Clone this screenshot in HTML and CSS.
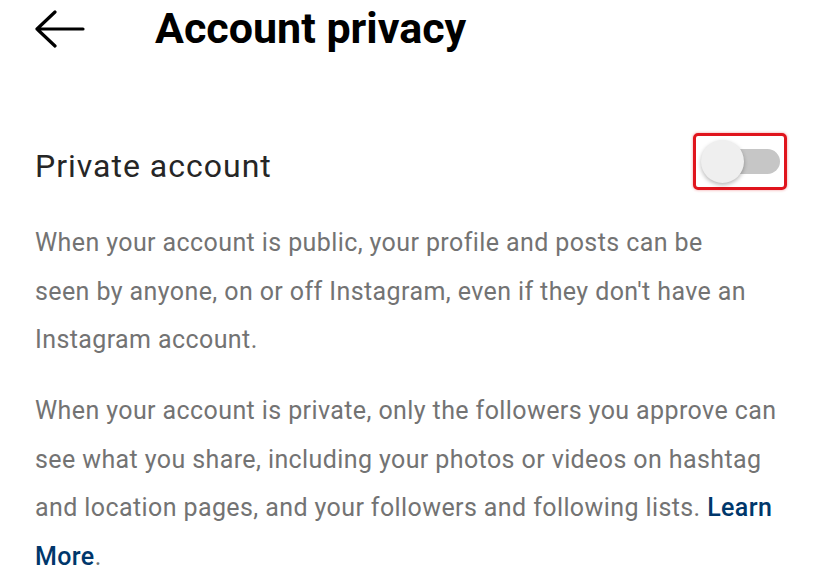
FILE: index.html
```html
<!DOCTYPE html>
<html lang="en">
<head>
<meta charset="utf-8">
<title>Account privacy</title>
<link rel="stylesheet" href="styles.css">
</head>
<body>
<header class="header">
  <svg class="back" width="50" height="40" viewBox="0 0 50 40" aria-hidden="true">
    <path d="M2 19 H48 M20 2 L2 19 L20 36" fill="none" stroke="#000" stroke-width="3.2" stroke-linecap="round" stroke-linejoin="round"/>
  </svg>
  <h1 class="title">Account privacy</h1>
</header>
<main class="content">
  <div class="row">
    <span class="row-label">Private account</span>
    <div class="toggle-frame">
      <div class="toggle">
        <span class="track"></span>
        <span class="knob"></span>
      </div>
    </div>
  </div>
  <p class="desc desc-narrow">When your account is public, your profile and posts can be seen by anyone, on or off Instagram, even if they don't have an Instagram account.</p>
  <p class="desc">When your account is private, only the followers you approve can see what you share, including your photos or videos on hashtag and location pages, and your followers and following lists. <a class="link" href="#">Learn More</a>.</p>
</main>
</body>
</html>
```

FILE: styles.css
```css
html, body {
  margin: 0;
  padding: 0;
  background: #ffffff;
}

body {
  font-family: Roboto, "Liberation Sans", sans-serif;
  width: 825px;
  height: 578px;
  overflow: hidden;
}

.header {
  display: flex;
  align-items: flex-start;
  padding-top: 2px;
  padding-left: 35px;
}

.back {
  margin-top: 8px;
  flex: none;
}

.title {
  margin: 0 0 0 70px;
  font-size: 43px;
  line-height: 52px;
  font-weight: 700;
  color: #000;
  letter-spacing: 0;
}

.content {
  padding: 0 35px;
}

.row {
  display: flex;
  align-items: center;
  justify-content: space-between;
  margin-top: 79px;
  padding-right: 3px;
}

.row-label {
  font-size: 32px;
  letter-spacing: 1px;
  color: #262626;
  padding-top: 8px;
}

.toggle-frame {
  width: 88px;
  height: 51px;
  border: 3px solid #e0141c;
  border-radius: 5px;
  box-shadow: 0 0 3px rgba(224, 20, 28, 0.45);
  flex: none;
}

.toggle {
  position: relative;
  width: 100%;
  height: 100%;
}

.track {
  position: absolute;
  left: 9px;
  top: 13px;
  width: 75px;
  height: 25px;
  border-radius: 13px;
  background: #c6c6c6;
}

.knob {
  position: absolute;
  left: 5px;
  top: 4px;
  width: 43px;
  height: 43px;
  border-radius: 50%;
  background: #efefef;
  box-shadow: 0 2px 4px rgba(0, 0, 0, 0.28);
}

.desc {
  margin: 29px 0 0;
  font-size: 25px;
  letter-spacing: 0.4px;
  line-height: 48.5px;
  color: #737373;
}

.desc-narrow {
  max-width: 715px;
}

.desc + .desc {
  margin-top: 22.5px;
}

.link {
  color: #00376b;
  font-weight: 500;
  text-decoration: none;
}
```
